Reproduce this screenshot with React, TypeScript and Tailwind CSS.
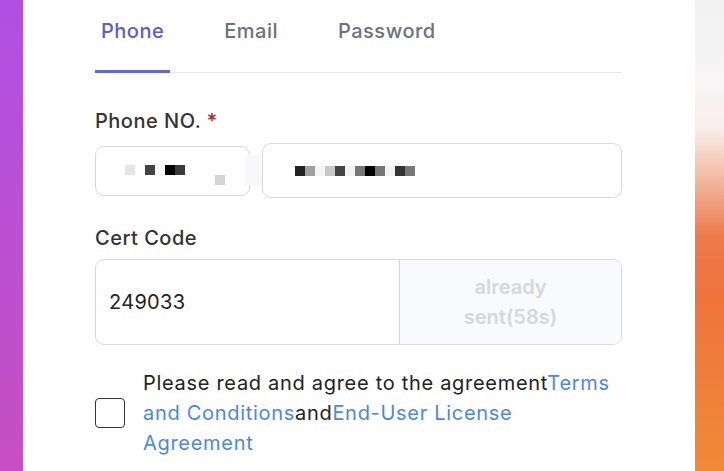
import React from "react";

const Sq = ({ c, cls = "" }: { c: string; cls?: string }) => (
  <span className={`block w-[10px] h-[10px] shrink-0 ${cls}`} style={{ backgroundColor: c }} />
);

export default function App() {
  const row2 = ["#222222", "#a0a0a0", "#f5f5f5", "#c8c8c8", "#444444", "#f2f2f2", "#777777", "#000000", "#777777", "#f2f2f2", "#333333", "#777777"];
  return (
    <div
      className="flex w-[724px] h-[471px] overflow-hidden bg-white tracking-[0.5px]"
      style={{ fontFamily: "Inter, 'Noto Sans', sans-serif" }}
    >
      <div className="w-[23px] shrink-0 bg-gradient-to-b from-[#b04fe3] to-[#c64fc2]" />
      <div className="flex-1 bg-white pl-[72px] pr-[73px]">
        {/* tabs */}
        <div className="flex gap-[48px] border-b border-[#e5e7eb] h-[73px] items-end">
          <div className="relative px-[6px] pb-[26px] text-[20px] leading-[30px] font-medium text-[#5b5bd6]">
            Phone
            <div className="absolute left-0 right-0 bottom-[-1px] h-[3px] bg-[#6366d6]" />
          </div>
          <div className="px-[6px] pb-[26px] text-[20px] leading-[30px] font-medium text-[#6b7280]">Email</div>
          <div className="px-[6px] pb-[26px] text-[20px] leading-[30px] font-medium text-[#6b7280]">Password</div>
        </div>

        <div className="mt-[33px] text-[20px] leading-[30px] font-medium text-[#333333]">
          Phone NO. <span className="text-[#b42323]">*</span>
        </div>

        <div className="relative mt-[7px] flex items-center gap-[12px] h-[55px]">
          <div className="w-[155px] h-[50px] rounded-[9px] border border-[#d6d8dc] bg-white flex items-start pl-[29px] pt-[18px]">
            <Sq c="#e5e5e5" />
            <Sq c="#444444" cls="ml-[10px]" />
            <Sq c="#000000" cls="ml-[10px]" />
            <Sq c="#3a3a3a" />
            <Sq c="#d1d5db" cls="ml-[30px] mt-[10px]" />
          </div>
          <div className="absolute left-[150px] top-[12px] w-[18px] h-[30px] bg-[#f8f8fc]" />
          <div className="relative flex-1 h-[55px] rounded-[9px] border border-[#d6d8dc] bg-white flex items-center pl-[32px]">
            {row2.map((c, i) => (
              <Sq key={i} c={c} />
            ))}
          </div>
        </div>

        <div className="mt-[25px] text-[20px] leading-[30px] font-medium text-[#333333]">Cert Code</div>

        <div className="mt-[6px] flex h-[86px] rounded-[9px] border border-[#d6d8dc] overflow-hidden">
          <div className="flex-1 flex items-center pl-[13px] text-[20px] text-[#222222] tracking-[0.3px]">249033</div>
          <div className="w-[222px] border-l border-[#d6d8dc] bg-[#f9fafb] flex items-center justify-center px-[30px] text-center text-[20px] leading-[30px] font-semibold text-[#d4d7dc] tracking-normal">
            already sent(58s)
          </div>
        </div>

        <div className="mt-[23px] flex items-center gap-[18px]">
          <div className="w-[30px] h-[30px] shrink-0 rounded-[4px] border border-[#333333] bg-white" />
          <p className="w-[470px] text-[20px] leading-[30px] text-[#222222] tracking-[0.7px]">
            Please read and agree to the agreement
            <span className="text-[#4a88e4]">Terms and Conditions</span>
            and
            <span className="text-[#4a88e4]">End-User License Agreement</span>
          </p>
        </div>
      </div>
      <div
        className="w-[29px] shrink-0"
        style={{
          background:
            "linear-gradient(to bottom, #f2f2f2 0%, #f7f5f5 18%, #f9efec 27%, #f3b9a2 38%, #ee7a4c 50%, #ef733c 62%, #f08a38 100%)",
        }}
      />
    </div>
  );
}
